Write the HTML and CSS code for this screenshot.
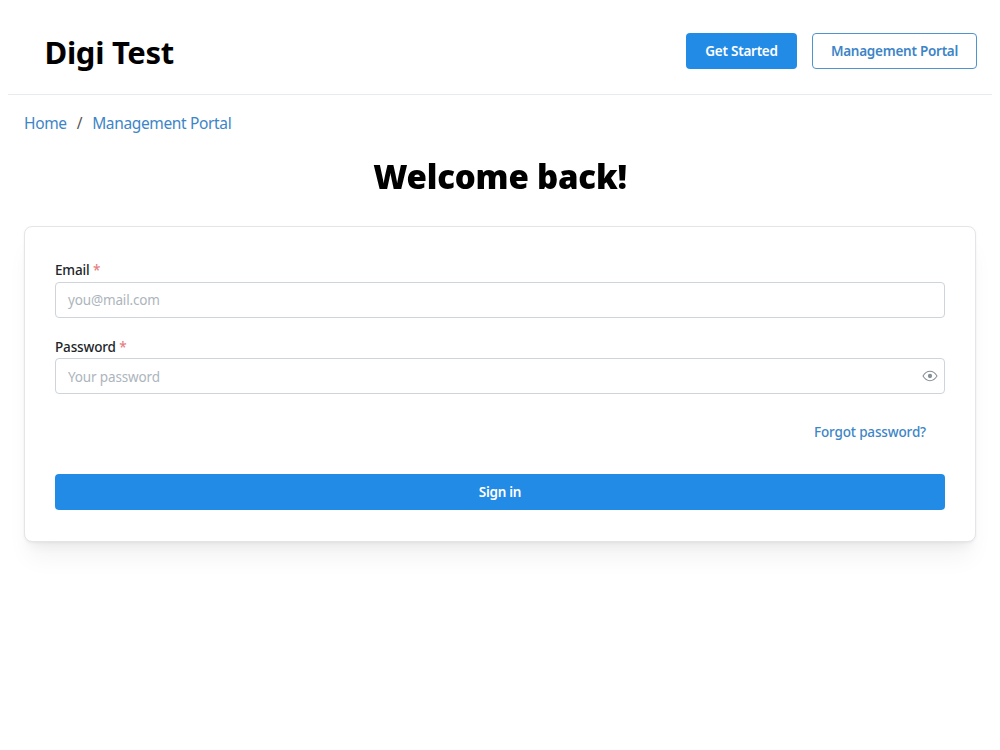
FILE: index.html
```html
<!DOCTYPE html>
<html lang="en">
<head>
<meta charset="utf-8">
<title>Digi Test</title>
<link rel="stylesheet" href="styles.css">
</head>
<body>
<header class="header">
  <div class="logo">Digi Test</div>
  <nav class="actions">
    <a class="btn btn-primary btn-get">Get Started</a>
    <a class="btn btn-outline">Management Portal</a>
  </nav>
</header>
<main class="main">
  <div class="crumbs">
    <a class="crumb">Home</a>
    <span class="sep">/</span>
    <a class="crumb">Management Portal</a>
  </div>
  <h1 class="title">Welcome back!</h1>
  <form class="card">
    <div class="field">
      <label class="label">Email <span class="req">*</span></label>
      <div class="input"><span class="ph">you@mail.com</span></div>
    </div>
    <div class="field">
      <label class="label">Password <span class="req">*</span></label>
      <div class="input">
        <span class="ph ph-low">Your password</span>
        <svg class="eye" viewBox="0 0 24 24" width="16" height="16" fill="none" stroke="#868e96" stroke-width="1.6">
          <path d="M1.5 12C4.5 7.2 8 5 12 5s7.5 2.200 10.500 7c-3 4.800-6.500 7-10.500 7S4.500 16.800 1.500 12z"/>
          <circle cx="12" cy="12" r="3.200" fill="#868e96" stroke="none"/>
        </svg>
      </div>
    </div>
    <div class="forgot-row"><a class="forgot">Forgot password?</a></div>
    <a class="btn btn-primary btn-block">Sign in</a>
  </form>
</main>
</body>
</html>
```
FILE: styles.css
```css
* { box-sizing: border-box; }
html { height: 100%; }
body {
  margin: 0;
  padding: 8px;
  min-height: 100%;
  background: #fff;
  color: #000;
  font-family: "Noto Sans", "Open Sans", sans-serif;
}
.header {
  height: 87px;
  border-bottom: 1px solid #e9ecef;
  display: flex;
  align-items: center;
  justify-content: space-between;
  padding: 0 15px 0 36.500px;
}
.logo {
  font-size: 31px;
  font-weight: 700;
  letter-spacing: -0.3px;
  line-height: 40px;
  margin-top: 2px;
}
.actions { display: flex; gap: 15px; margin-top: -1px; }
.btn {
  display: flex;
  align-items: center;
  justify-content: center;
  height: 36px;
  border-radius: 4px;
  font-size: 13.500px;
  font-weight: 600;
  letter-spacing: -0.250px;
}
.btn-primary { background: #228be6; color: #fff; }
.btn-get { width: 111px; }
.btn-outline {
  width: 165px;
  background: #fff;
  color: #3d85c6;
  border: 1px solid #4f94cc;
}
.main { padding: 0 16px; }
.crumbs {
  display: flex;
  align-items: center;
  height: 24px;
  margin-top: 16px;
  font-size: 15.500px;
  letter-spacing: -0.350px;
}
.crumb { color: #3d85c6; }
.sep { color: #555; margin: 0 10px; }
.title {
  margin: 20px 0 27px;
  text-align: center;
  font-size: 33px;
  line-height: 44px;
  font-weight: 900;
  letter-spacing: -0.200px;
  will-change: transform;
}
.card {
  height: 316px;
  padding: 30px;
  background: #fff;
  border: 1px solid #e3e5e8;
  border-radius: 8px;
  box-shadow: 0 1px 3px rgba(0,0,0,.05), 0 20px 25px -5px rgba(0,0,0,.05), 0 10px 10px -5px rgba(0,0,0,.04);
}
.field { margin-bottom: 15.400px; }
.label {
  display: block;
  height: 25px;
  padding-top: 3.400px;
  font-size: 13.500px;
  line-height: 20px;
  font-weight: 500;
  color: #212529;
  letter-spacing: -0.150px;
}
.req { color: #e58080; }
.input {
  display: flex;
  align-items: center;
  justify-content: space-between;
  height: 36px;
  padding: 0 14px 0 12px;
  border: 1px solid #ced4da;
  border-radius: 4px;
  background: #fff;
}
.ph { font-size: 13.500px; color: #adb5bd; letter-spacing: -0.150px; }
.ph-low { padding-top: 2px; }
.eye { margin-right: -8px; }
.forgot-row {
  display: flex;
  justify-content: flex-end;
  margin-top: 27.600px;
  padding-right: 19px;
  height: 20px;
}
.forgot { font-size: 13.500px; font-weight: 500; line-height: 20px; color: #3d85c6; letter-spacing: -0.150px; }
.btn-block { width: 100%; margin-top: 32px; }
```
